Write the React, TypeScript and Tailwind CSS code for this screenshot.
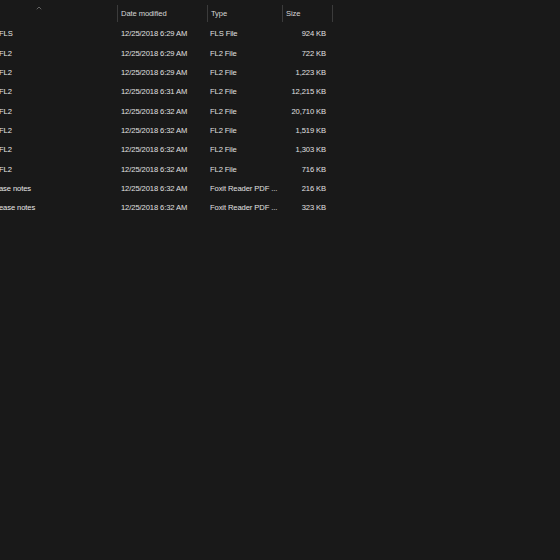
import { ChevronUp } from 'lucide-react'

type FileRow = {
  name: string
  modified: string
  type: string
  size: string
}

const rows: FileRow[] = [
  { name: 'FLS', modified: '12/25/2018 6:29 AM', type: 'FLS File', size: '924 KB' },
  { name: 'FL2', modified: '12/25/2018 6:29 AM', type: 'FL2 File', size: '722 KB' },
  { name: 'FL2', modified: '12/25/2018 6:29 AM', type: 'FL2 File', size: '1,223 KB' },
  { name: 'FL2', modified: '12/25/2018 6:31 AM', type: 'FL2 File', size: '12,215 KB' },
  { name: 'FL2', modified: '12/25/2018 6:32 AM', type: 'FL2 File', size: '20,710 KB' },
  { name: 'FL2', modified: '12/25/2018 6:32 AM', type: 'FL2 File', size: '1,519 KB' },
  { name: 'FL2', modified: '12/25/2018 6:32 AM', type: 'FL2 File', size: '1,303 KB' },
  { name: 'FL2', modified: '12/25/2018 6:32 AM', type: 'FL2 File', size: '716 KB' },
  { name: 'ase notes', modified: '12/25/2018 6:32 AM', type: 'Foxit Reader PDF ...', size: '216 KB' },
  { name: 'ease notes', modified: '12/25/2018 6:32 AM', type: 'Foxit Reader PDF ...', size: '323 KB' },
]

function HeaderCell({ label, width }: { label: string; width: string }) {
  return (
    <div className={`flex items-center h-[17px] ${width}`}>
      <div className="w-px h-full bg-[#3b3b3b]" />
      <span className="pl-[3px] pt-[1px] text-[#d6d6d6]">{label}</span>
    </div>
  )
}

export default function App() {
  return (
    <div
      className="w-[560px] h-[560px] bg-[#191919] overflow-hidden text-[7.6px] tracking-[-0.1px] text-[#e0e0e0]"
      style={{ fontFamily: '"Liberation Sans", Arial, sans-serif' }}
    >
      {/* Column header */}
      <div className="relative flex items-start h-[24.5px] pt-[5px]">
        <ChevronUp className="absolute left-[35px] top-[4px] w-[8px] h-[8px] text-[#8a8a8a]" strokeWidth={2} />
        <div className="w-[117px]" />
        <HeaderCell label="Date modified" width="w-[90px]" />
        <HeaderCell label="Type" width="w-[75px]" />
        <HeaderCell label="Size" width="w-[50px]" />
        <div className="w-px h-[17px] bg-[#3b3b3b]" />
      </div>

      {/* Rows */}
      <div className="flex flex-col">
        {rows.map((r, i) => (
          <div key={i} className="flex items-center h-[19.33px]">
            <div className="w-[122px] -ml-px whitespace-nowrap text-[#e8e8e8]">{r.name}</div>
            <div className="w-[89px] whitespace-nowrap">{r.modified}</div>
            <div className="w-[76px] whitespace-nowrap">{r.type}</div>
            <div className="w-[40px] text-right whitespace-nowrap">{r.size}</div>
          </div>
        ))}
      </div>
    </div>
  )
}
